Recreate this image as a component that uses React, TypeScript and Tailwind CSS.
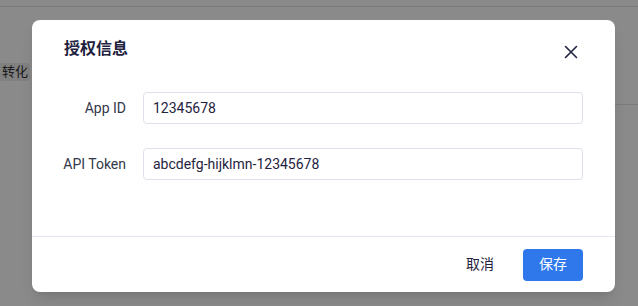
import React from 'react'

const font = { fontFamily: 'Roboto, "Noto Sans CJK SC", sans-serif' }

function Field({ label, value }: { label: string; value: string }) {
  return (
    <div className="flex items-center">
      <label className="w-[94px] shrink-0 pr-[17px] text-right text-[14px] text-[#323849]">
        {label}
      </label>
      <input
        readOnly
        value={value}
        className="h-[32px] flex-1 rounded-[4px] border border-[#dfe1ea] bg-white px-[9px] text-[14px] text-[#1f2340] outline-none"
      />
    </div>
  )
}

export default function App() {
  return (
    <div className="relative h-[306px] w-[638px] overflow-hidden bg-white" style={font}>
      {/* page behind the mask */}
      <div className="h-[7px] border-b border-[#e4e4e4]" />
      <div className="flex">
        <div className="w-[615px]" />
        <div className="mt-[97px] h-px flex-1 bg-[#e4e4e4]" />
      </div>
      <div className="absolute left-0 top-[63px] rounded-[2px] bg-[#eeeeee] px-[2px] py-[1px] text-[13px] leading-[16px] text-[#333]">
        转化
      </div>

      {/* mask */}
      <div className="absolute inset-0 bg-black/[0.46]" />

      {/* dialog */}
      <div className="absolute left-[32px] top-[20px] flex h-[272px] w-[583px] flex-col rounded-[8px] bg-white shadow-lg">
        <div className="flex items-center justify-between pl-[32px] pr-[37px] pt-[17px]">
          <h2 className="text-[16px] font-semibold leading-[24px] text-[#1f2340]">授权信息</h2>
          <button className="mt-[6px] text-[#1f2340]">
            <svg width="14" height="14" viewBox="0 0 14 14" fill="none">
              <path d="M1.5 1.5l11 11M12.5 1.5l-11 11" stroke="currentColor" strokeWidth="1.6" strokeLinecap="round" />
            </svg>
          </button>
        </div>

        <div className="flex flex-1 flex-col gap-[24px] pl-[17px] pr-[32px] pt-[31px]">
          <Field label="App ID" value="12345678" />
          <Field label="API Token" value="abcdefg-hijklmn-12345678" />
        </div>

        <div className="flex h-[56px] items-center justify-end gap-[13px] border-t border-[#e4e5ee] pr-[32px]">
          <button className="px-[16px] text-[14px] text-[#1f2340]">取消</button>
          <button className="h-[32px] w-[60px] rounded-[4px] bg-[#2f78ec] text-[14px] text-white">保存</button>
        </div>
      </div>
    </div>
  )
}
